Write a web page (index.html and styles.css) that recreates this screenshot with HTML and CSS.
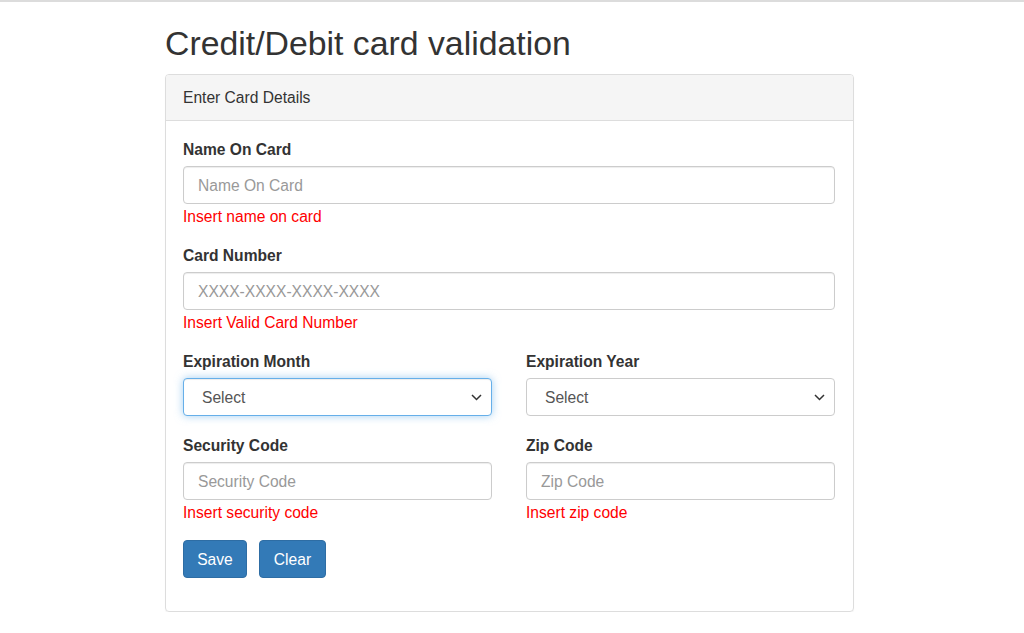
FILE: index.html
```html
<!DOCTYPE html>
<html lang="en">
<head>
<meta charset="utf-8">
<title>Credit/Debit card validation</title>
<link rel="stylesheet" href="styles.css">
</head>
<body>
<div class="page">
  <h1 class="title">Credit/Debit card validation</h1>
  <div class="panel">
    <div class="panel-heading">Enter Card Details</div>
    <form class="panel-body">
      <div class="group">
        <label class="label">Name On Card</label>
        <input class="control" type="text" placeholder="Name On Card">
        <div class="error">Insert name on card</div>
      </div>
      <div class="group">
        <label class="label">Card Number</label>
        <input class="control" type="text" placeholder="XXXX-XXXX-XXXX-XXXX">
        <div class="error">Insert Valid Card Number</div>
      </div>
      <div class="row row-select">
        <div class="col">
          <label class="label">Expiration Month</label>
          <div class="select focused"><span>Select</span><svg class="chev" width="11" height="7" viewBox="0 0 11 7"><path d="M1 1l4.5 4.5 4.5-4.5" fill="none" stroke="#333" stroke-width="1.5"/></svg></div>
        </div>
        <div class="col">
          <label class="label">Expiration Year</label>
          <div class="select"><span>Select</span><svg class="chev" width="11" height="7" viewBox="0 0 11 7"><path d="M1 1l4.5 4.5 4.5-4.5" fill="none" stroke="#333" stroke-width="1.5"/></svg></div>
        </div>
      </div>
      <div class="row group">
        <div class="col">
          <label class="label">Security Code</label>
          <input class="control" type="text" placeholder="Security Code">
          <div class="error">Insert security code</div>
        </div>
        <div class="col">
          <label class="label">Zip Code</label>
          <input class="control" type="text" placeholder="Zip Code">
          <div class="error">Insert zip code</div>
        </div>
      </div>
      <div class="actions">
        <button type="button" class="btn btn-save">Save</button>
        <button type="button" class="btn btn-clear">Clear</button>
      </div>
    </form>
  </div>
</div>
</body>
</html>
```

FILE: styles.css
```css
html, body {
  margin: 0;
  padding: 0;
  background: #fff;
}
body {
  border-top: 2px solid #dcdcdc;
  font-family: "Liberation Sans", Arial, sans-serif;
  font-size: 15.6px;
  color: #333;
}
.page {
  margin-left: 165px;
  width: 689px;
}
.title {
  margin: 22px 0 12px;
  font-size: 33.8px;
  line-height: 38px;
  font-weight: normal;
  color: #333;
}
.panel {
  border: 1px solid #ddd;
  border-radius: 4px;
  box-shadow: 0 1px 1px rgba(0,0,0,.05);
}
.panel-heading {
  background: #f5f5f5;
  border-bottom: 1px solid #ddd;
  border-radius: 3px 3px 0 0;
  padding: 11px 17px;
  line-height: 23px;
}
.panel-body {
  margin: 0;
  padding: 17px 18px 33px 17px;
  display: flex;
  flex-direction: column;
}
.group {
  margin-bottom: 16px;
}
.row {
  display: grid;
  grid-template-columns: 1fr 1fr;
  column-gap: 34px;
}
.row-select {
  margin-bottom: 18px;
}
.col {
  display: flex;
  flex-direction: column;
}
.group:not(.row) {
  display: flex;
  flex-direction: column;
}
.label {
  font-weight: bold;
  line-height: 21px;
  padding-top: 1px;
  margin-bottom: 6px;
}
.control {
  box-sizing: border-box;
  height: 38px;
  width: 100%;
  margin: 0;
  padding: 1px 14px 0;
  border: 1px solid #ccc;
  border-radius: 4px;
  box-shadow: inset 0 1px 1px rgba(0,0,0,.075);
  font-family: inherit;
  font-size: 15.6px;
  color: #555;
  background: #fff;
}
.control::placeholder {
  color: #999;
}
.select {
  box-sizing: border-box;
  height: 38px;
  display: flex;
  align-items: center;
  justify-content: space-between;
  padding: 1px 9px 0 18px;
  border: 1px solid #ccc;
  border-radius: 4px;
  background: #fff;
  color: #555;
}
.select.focused {
  border-color: #66afe9;
  box-shadow: inset 0 1px 1px rgba(0,0,0,.075), 0 0 8px rgba(102,175,233,.6);
}
.chev {
  display: block;
}
.error {
  color: #ff0000;
  line-height: 23px;
  padding-top: 1px;
}
.actions {
  display: flex;
  gap: 12px;
}
.btn {
  height: 38px;
  padding: 1px 0 0;
  border: 1px solid #2e6da4;
  border-radius: 4px;
  background: #337ab7;
  color: #fff;
  font-family: inherit;
  font-size: 15.6px;
  cursor: pointer;
}
.btn-save {
  width: 64px;
}
.btn-clear {
  width: 67px;
}
```
